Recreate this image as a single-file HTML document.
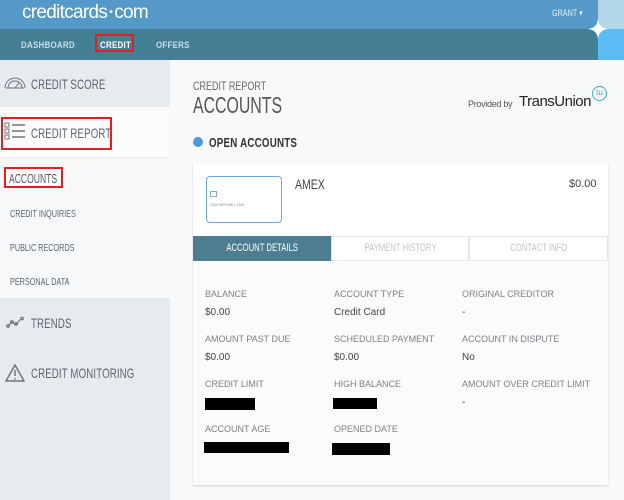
<!DOCTYPE html><html><head><style>
*{margin:0;padding:0;box-sizing:border-box}
body{width:624px;height:500px;overflow:hidden;background:#f8f9fa;font-family:"Liberation Sans",sans-serif;position:relative}
.a{position:absolute}
.c{transform:scaleX(.69);transform-origin:0 0;white-space:nowrap}
.top{left:0;top:0;width:598px;height:29px;background:#5499c7}
.nav{left:0;top:29px;width:598px;height:31px;background:#457f95}
.logo{left:22px;top:2px;color:#fff;font-size:19px;letter-spacing:-0.7px}
.nv{top:40px;color:#c8dde6;font-size:9px;font-weight:bold;letter-spacing:.3px;transform:scaleX(.88)}
.side{left:0;top:60px;width:170px;height:440px;background:#e8ebee}
.lbl{color:#5a6670;font-size:14px;letter-spacing:.2px}
.sub{color:#5a6670;font-size:10.5px}
.h{color:#7c8186;font-size:9px}
.v{color:#444;font-size:10px}
.blk{background:#000;height:12px}
.tab{font-size:11px;text-align:center;line-height:25px}
.tab span{display:inline-block;transform:scaleX(.7)}
</style></head><body>
<div class="a top"></div><div class="a nav"></div>
<div class="a" style="left:598px;top:0;width:26px;height:29px;background:#b3d7e8"></div>
<div class="a" style="left:598px;top:29px;width:26px;height:31px;background:#5bbcf5"></div>
<svg class="a" style="left:588px;top:19px" width="20" height="20"><path d="M10 0Q11 9 20 10Q11 11 10 20Q9 11 0 10Q9 9 10 0Z" fill="#fff"/></svg>
<div class="a logo">creditcards<span style="font-size:10px;vertical-align:3px"> • </span>com</div>
<div class="a c" style="left:552px;top:8px;color:#e6f0f7;font-size:9px;transform:scaleX(.8)">GRANT ▾</div>
<div class="a nv c" style="left:21px">DASHBOARD</div>
<div class="a nv c" style="left:100px;color:#fff">CREDIT</div>
<div class="a" style="left:95px;top:34px;width:39px;height:18px;border:2px solid #e02020"></div>
<div class="a nv c" style="left:156px">OFFERS</div>
<div class="a side"></div>
<div class="a" style="left:0;top:107px;width:170px;height:51px;background:#fbfbfc;border-bottom:1px solid #e6e8ea"></div>
<div class="a" style="left:0;top:158px;width:170px;height:140px;background:#f7f8fa"></div>
<svg class="a" style="left:4px;top:76px" width="22" height="14"><g stroke="#6a7580" fill="none" stroke-width="1"><path d="M1 12A10 10 0 0 1 21 12"/><path d="M4 12A7 7 0 0 1 18 12"/><path d="M11 12L15 7"/><path d="M2 12H20"/></g></svg>
<div class="a lbl c" style="left:31px;top:76px">CREDIT SCORE</div>
<div class="a" style="left:4px;top:121px;width:22px;height:20px">
<svg width="22" height="20"><g stroke="#6a7580" fill="none" stroke-width="1"><rect x="1" y="2" width="4" height="4"/><rect x="1" y="8" width="4" height="4"/><rect x="1" y="14" width="4" height="4"/><path d="M8 4h13M8 10h13M8 16h13" stroke-width="1.5"/></g></svg></div>
<div class="a lbl c" style="left:31px;top:125px">CREDIT REPORT</div>
<div class="a" style="left:1px;top:117px;width:111px;height:33px;border:2px solid #e02020"></div>
<div class="a" style="left:4px;top:167px;width:59px;height:21px;border:2px solid #e02020;background:#fff"></div>
<div class="a c" style="left:9px;top:171px;color:#4c5862;font-size:13px;transform:scaleX(.66)">ACCOUNTS</div>
<div class="a sub c" style="left:10px;top:208px">CREDIT INQUIRIES</div>
<div class="a sub c" style="left:10px;top:242px">PUBLIC RECORDS</div>
<div class="a sub c" style="left:10px;top:276px">PERSONAL DATA</div>
<svg class="a" style="left:6px;top:316px" width="20" height="12"><g stroke="#6a7580" fill="none" stroke-width="1.2"><path d="M2 10L6 6L10 8L15 3"/><circle cx="2" cy="10" r="1.3"/><circle cx="6" cy="6" r="1.3"/><circle cx="10" cy="8" r="1.3"/><circle cx="16" cy="2.5" r="1.3"/></g></svg>
<div class="a lbl c" style="left:31px;top:315px">TRENDS</div>
<svg class="a" style="left:5px;top:364px" width="20" height="18"><path d="M10 1L19 17H1Z" stroke="#6a7580" fill="none" stroke-width="1.5"/><path d="M10 6v6M10 14v1.5" stroke="#6a7580" stroke-width="1.5"/></svg>
<div class="a lbl c" style="left:31px;top:365px">CREDIT MONITORING</div>
<div class="a c" style="left:193px;top:79px;color:#666;font-size:12px;transform:scaleX(.75)">CREDIT REPORT</div>
<div class="a c" style="left:193px;top:92px;color:#555;font-size:23px">ACCOUNTS</div>
<div class="a" style="left:468px;top:99px;color:#555;font-size:9px;letter-spacing:-.3px">Provided by</div>
<div class="a" style="left:519px;top:93px;color:#222;font-size:15px;letter-spacing:-.5px">TransUnion</div>
<div class="a" style="left:592px;top:86px;width:15px;height:15px;border:1.5px solid #2ab0d0;border-radius:50%;color:#2ab0d0;font-size:8px;text-align:center;line-height:12px">tu</div>
<div class="a" style="left:193px;top:137px;width:10px;height:10px;border-radius:50%;background:#4a9ad8"></div>
<div class="a c" style="left:209px;top:135px;color:#333;font-size:13px;font-weight:bold;letter-spacing:.3px;transform:scaleX(.75)">OPEN ACCOUNTS</div>
<div class="a" style="left:193px;top:163px;width:415px;height:322px;background:#fff;box-shadow:0 1px 2px rgba(0,0,0,.15)"></div>
<div class="a" style="left:193px;top:262px;width:415px;height:222px;background:#fbfbfb"></div>
<div class="a" style="left:206px;top:176px;width:76px;height:47px;border:1.5px solid #6aaad8;border-radius:4px">
<div class="a" style="left:3px;top:14px;width:7px;height:6px;border:1px solid #8ab"></div>
<div class="a" style="left:3px;top:26px;font-size:3.5px;color:#789">1234 5678 9901 2345</div></div>
<div class="a c" style="left:295px;top:176px;color:#444;font-size:14px;transform:scaleX(.75)">AMEX</div>
<div class="a" style="left:569px;top:178px;color:#444;font-size:11px">$0.00</div>
<div class="a tab" style="left:193px;top:236px;width:138px;height:25px;background:#4d7d91;color:#fff"><span>ACCOUNT DETAILS</span></div>
<div class="a tab" style="left:331px;top:236px;width:138px;height:25px;border:1px solid #e6e6e6;color:#c4c4c4;line-height:23px"><span>PAYMENT HISTORY</span></div>
<div class="a tab" style="left:469px;top:236px;width:139px;height:25px;border:1px solid #e6e6e6;color:#c4c4c4;line-height:23px"><span>CONTACT INFO</span></div>
<div class="a h" style="left:205px;top:289px">BALANCE</div><div class="a h" style="left:334px;top:289px">ACCOUNT TYPE</div><div class="a h" style="left:462px;top:289px">ORIGINAL CREDITOR</div>
<div class="a v" style="left:205px;top:307px">$0.00</div><div class="a v" style="left:334px;top:307px">Credit Card</div><div class="a v" style="left:462px;top:307px">-</div>
<div class="a h" style="left:205px;top:334px">AMOUNT PAST DUE</div><div class="a h" style="left:334px;top:334px">SCHEDULED PAYMENT</div><div class="a h" style="left:462px;top:334px">ACCOUNT IN DISPUTE</div>
<div class="a v" style="left:205px;top:352px">$0.00</div><div class="a v" style="left:334px;top:352px">$0.00</div><div class="a v" style="left:462px;top:352px">No</div>
<div class="a h" style="left:205px;top:379px">CREDIT LIMIT</div><div class="a h" style="left:334px;top:379px">HIGH BALANCE</div><div class="a h" style="left:462px;top:379px">AMOUNT OVER CREDIT LIMIT</div>
<div class="a blk" style="left:205px;top:398px;width:50px"></div><div class="a blk" style="left:333px;top:398px;width:44px;height:11px"></div><div class="a v" style="left:462px;top:397px">-</div>
<div class="a h" style="left:205px;top:424px">ACCOUNT AGE</div><div class="a h" style="left:334px;top:424px">OPENED DATE</div>
<div class="a blk" style="left:204px;top:442px;width:85px;height:11px"></div><div class="a blk" style="left:332px;top:443px;width:58px"></div>
</body></html>
